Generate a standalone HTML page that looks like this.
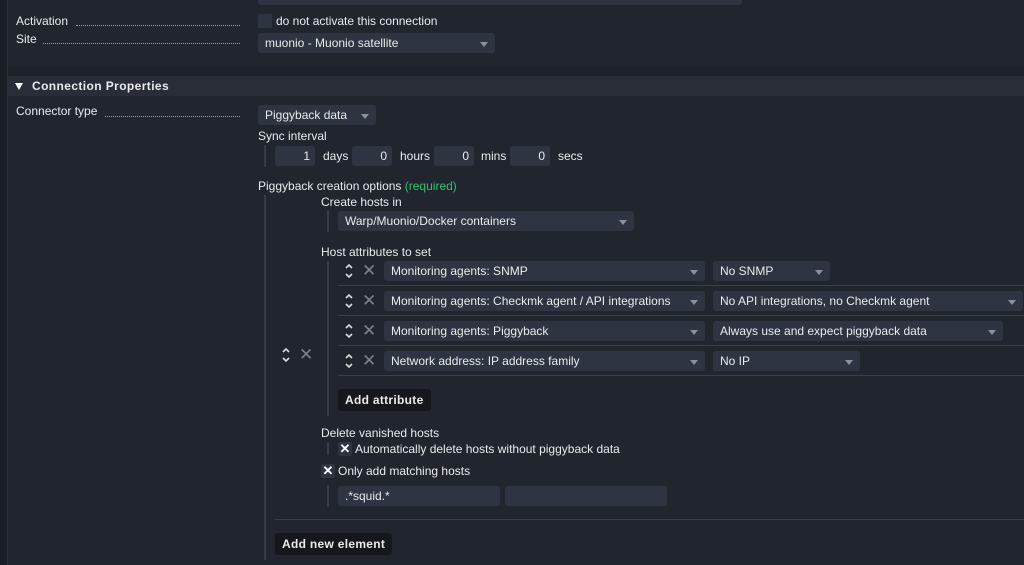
<!DOCTYPE html>
<html><head><style>
*{margin:0;padding:0;box-sizing:border-box}
body{width:1024px;height:565px;background:#21262e;font-family:"Liberation Sans",sans-serif;font-size:12px;color:#e9eaec;position:relative;overflow:hidden}
.a{position:absolute;white-space:nowrap}
.inp{position:absolute;background:#2e3441;border-radius:3px;height:20px;line-height:20px;padding-left:7px}
.sel:after{content:"";position:absolute;right:7px;top:9px;border-left:4px solid transparent;border-right:4px solid transparent;border-top:5px solid #8b909a}
.lbl{position:absolute;left:16px;white-space:nowrap}
.dots{position:absolute;border-bottom:1px dotted #9aa0a8;height:1px}
.btn{position:absolute;background:#14171c;border-radius:3px;font-weight:bold;height:22px;line-height:22px;padding:0 7px;letter-spacing:.3px}
.vl{position:absolute;width:2px;background:#363c47}
.hl{position:absolute;height:1px;background:#3a404b}
.chk{position:absolute;width:14px;height:14px;background:#2e3441;border-radius:2px;color:#fff;font-size:13px;line-height:14px;text-align:center;font-weight:bold}
.arr{position:absolute;width:10px;height:16px}
.x{position:absolute;color:#7c828b;font-size:17px;line-height:14px}
</style></head><body>
<svg width="0" height="0" style="position:absolute"><defs><g id="ud"><path d="M2 5 L5 2 L8 5 M2 11 L5 14 L8 11" fill="none" stroke="#dcdcdc" stroke-width="1.6"/></g></defs></svg>
<div class="a" style="left:0;top:0;width:7px;height:565px;background:#1b1f25"></div>
<div class="a" style="left:7px;top:0;width:1px;height:565px;background:#2a2f38"></div>
<div class="inp" style="left:258px;top:-15px;width:484px;height:20px"></div>
<div class="lbl" style="top:14px">Activation</div><div class="dots" style="left:76px;top:25px;width:164px"></div>
<div class="lbl" style="top:32px">Site</div><div class="dots" style="left:43px;top:43px;width:197px"></div>
<div class="chk" style="left:258px;top:14px"></div>
<div class="a" style="left:276px;top:14px">do not activate this connection</div>
<div class="inp sel" style="left:258px;top:33px;width:237px">muonio - Muonio satellite</div>
<div class="a" style="left:8px;top:67px;width:1016px;height:9px;background:#1e2229"></div>
<div class="a" style="left:8px;top:76px;width:1016px;height:20px;background:#282d38"></div>
<div class="a" style="left:15px;top:83px;border-left:4px solid transparent;border-right:4px solid transparent;border-top:7px solid #fff"></div>
<div class="a" style="left:32px;top:79px;font-weight:bold;letter-spacing:.4px">Connection Properties</div>
<div class="lbl" style="top:104px">Connector type</div><div class="dots" style="left:105px;top:116px;width:135px"></div>
<div class="inp sel" style="left:258px;top:105px;width:118px;padding-right:20px">Piggyback data</div>
<div class="a" style="left:258px;top:129px">Sync interval</div>
<div class="vl" style="left:264px;top:145px;height:22px"></div>
<div class="inp" style="left:275px;top:146px;width:40px;text-align:right;padding-right:5px">1</div><div class="a" style="left:323px;top:149px">days</div>
<div class="inp" style="left:352px;top:146px;width:40px;text-align:right;padding-right:5px">0</div><div class="a" style="left:400px;top:149px">hours</div>
<div class="inp" style="left:434px;top:146px;width:40px;text-align:right;padding-right:5px">0</div><div class="a" style="left:481px;top:149px">mins</div>
<div class="inp" style="left:510px;top:146px;width:40px;text-align:right;padding-right:5px">0</div><div class="a" style="left:558px;top:149px">secs</div>
<div class="a" style="left:258px;top:179px">Piggyback creation options <span style="color:#2ec36f">(required)</span></div>
<div class="vl" style="left:264px;top:195px;height:365px"></div>
<svg class="arr" style="left:281px;top:347px" viewBox="0 0 10 16"><use href="#ud"/></svg>
<div class="x" style="left:299px;top:348px">✕</div>
<div class="a" style="left:321px;top:195px">Create hosts in</div>
<div class="vl" style="left:327px;top:210px;height:22px"></div>
<div class="inp sel" style="left:338px;top:211px;width:296px">Warp/Muonio/Docker containers</div>
<div class="a" style="left:321px;top:245px">Host attributes to set</div>
<div class="vl" style="left:327px;top:261px;height:155px"></div>
<svg class="arr" style="left:344px;top:263px" viewBox="0 0 10 16"><use href="#ud"/></svg><div class="x" style="left:362px;top:264px">✕</div>
<div class="inp sel" style="left:384px;top:261px;width:321px">Monitoring agents: SNMP</div>
<div class="inp sel" style="left:713px;top:261px;width:117px">No SNMP</div>
<div class="hl" style="left:338px;top:285px;width:686px"></div>
<svg class="arr" style="left:344px;top:293px" viewBox="0 0 10 16"><use href="#ud"/></svg><div class="x" style="left:362px;top:294px">✕</div>
<div class="inp sel" style="left:384px;top:291px;width:321px">Monitoring agents: Checkmk agent / API integrations</div>
<div class="inp sel" style="left:713px;top:291px;width:310px">No API integrations, no Checkmk agent</div>
<div class="hl" style="left:338px;top:315px;width:686px"></div>
<svg class="arr" style="left:344px;top:323px" viewBox="0 0 10 16"><use href="#ud"/></svg><div class="x" style="left:362px;top:324px">✕</div>
<div class="inp sel" style="left:384px;top:321px;width:321px">Monitoring agents: Piggyback</div>
<div class="inp sel" style="left:713px;top:321px;width:290px">Always use and expect piggyback data</div>
<div class="hl" style="left:338px;top:345px;width:686px"></div>
<svg class="arr" style="left:344px;top:353px" viewBox="0 0 10 16"><use href="#ud"/></svg><div class="x" style="left:362px;top:354px">✕</div>
<div class="inp sel" style="left:384px;top:351px;width:321px">Network address: IP address family</div>
<div class="inp sel" style="left:713px;top:351px;width:147px">No IP</div>
<div class="hl" style="left:338px;top:375px;width:686px"></div>
<div class="btn" style="left:338px;top:389px">Add attribute</div>
<div class="a" style="left:321px;top:426px">Delete vanished hosts</div>
<div class="vl" style="left:327px;top:442px;height:13px"></div>
<div class="chk" style="left:338px;top:442px">✕</div>
<div class="a" style="left:355px;top:442px">Automatically delete hosts without piggyback data</div>
<div class="chk" style="left:321px;top:464px">✕</div>
<div class="a" style="left:338px;top:464px">Only add matching hosts</div>
<div class="vl" style="left:327px;top:485px;height:22px"></div>
<div class="inp" style="left:338px;top:486px;width:162px">.*squid.*</div>
<div class="inp" style="left:505px;top:486px;width:162px"></div>
<div class="hl" style="left:275px;top:519px;width:749px"></div>
<div class="btn" style="left:275px;top:533px">Add new element</div>
</body></html>
